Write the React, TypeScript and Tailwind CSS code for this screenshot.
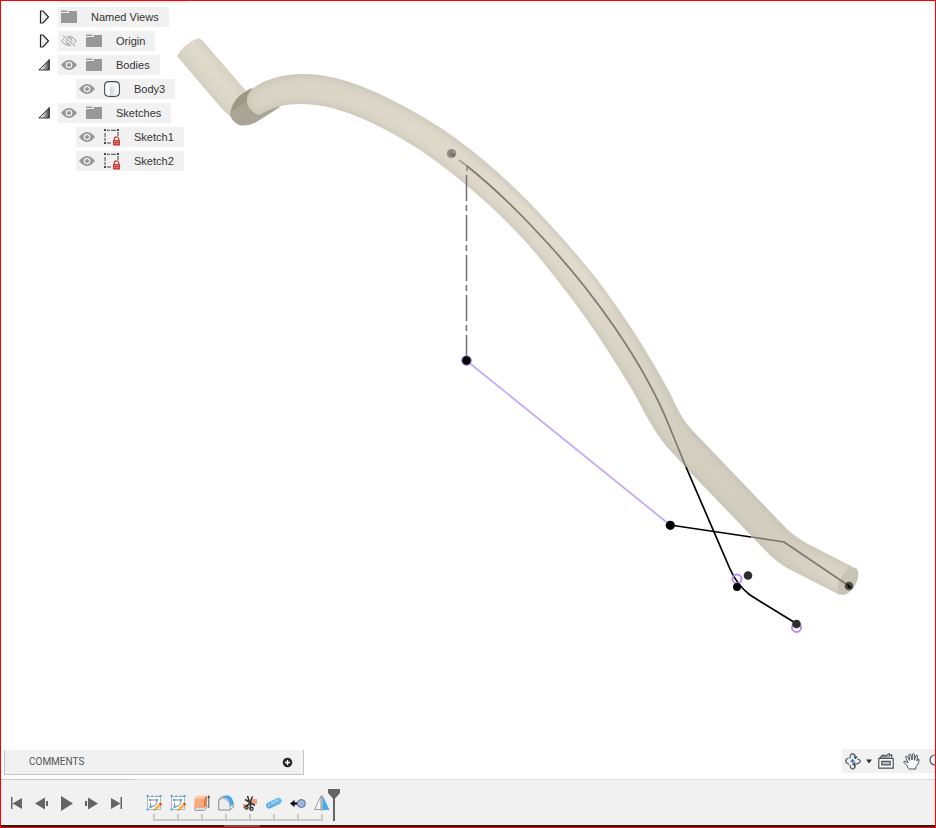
import { useState } from "react";
import type { ReactNode } from "react";

interface TreeNode {
  name: string;
  icon: "folder" | "body" | "sketch";
  // undefined = the row has no visibility toggle
  visible?: boolean;
  open?: boolean;
  children?: TreeNode[];
}

const browserTree: TreeNode[] = [
  { name: "Named Views", icon: "folder", open: false },
  { name: "Origin", icon: "folder", visible: false, open: false },
  {
    name: "Bodies",
    icon: "folder",
    visible: true,
    open: true,
    children: [{ name: "Body3", icon: "body", visible: true }],
  },
  {
    name: "Sketches",
    icon: "folder",
    visible: true,
    open: true,
    children: [
      { name: "Sketch1", icon: "sketch", visible: true },
      { name: "Sketch2", icon: "sketch", visible: true },
    ],
  },
];

function FolderIcon() {
  return (
    <svg width="16" height="16" viewBox="0 0 16 16" fill="#989898">
      <path d="M0 1.500h6.500v1.500H0zM8 2h8v1H8z" />
      <path d="M0 4h7l1.500-1H16v11H0z" />
    </svg>
  );
}

function BodyIcon() {
  return (
    <svg width="16" height="16" viewBox="0 0 16 16">
      <defs>
        <linearGradient id="cyl">
          <stop offset="0" stopColor="#fff" />
          <stop offset="0.3" stopColor="#fff" />
          <stop offset="0.35" stopColor="#d3d6de" />
          <stop offset="0.7" stopColor="#e9ebf0" />
          <stop offset="1" stopColor="#fff" />
        </linearGradient>
      </defs>
      <path d="M.7 4Q1 .7 5 .7h6q4 0 4.300 3.300v8q-.3 3.300-4.300 3.300H5Q1 15.300.7 12z" fill="#fff" stroke="#3f4756" strokeWidth="1.200" />
      <path d="M1.500 5q6.500 2 13 0v7q-.5 2.500-3.500 2.500H5q-3 0-3.500-2.500z" fill="url(#cyl)" />
    </svg>
  );
}

function SketchIcon() {
  return (
    <svg width="16" height="17" viewBox="0 0 16 17">
      <g fill="#444">
        <path d="M0 0h2v2H0zM13 0h2v2h-2zM0 13h2v2H0z" />
        <path d="M3 .8h3v1H3zM7 .8h5v1H7zM.5 4h1v4h-1zM.5 9h1v3h-1zM3 13.500h4v1H3zM13.500 3h1v4h-1z" />
      </g>
      <path d="M10.300 11.500V10a2.200 2.200 0 0 1 4.400 0v1.500" fill="none" stroke="#c93c3c" strokeWidth="1.200" />
      <path d="M9 11h7v5.500H9z" fill="#c93c3c" />
      <path d="M10 12.500h5M10 14.500h5" stroke="#e88" strokeWidth="0.700" />
    </svg>
  );
}

function EyeIcon({ off }: { off?: boolean }) {
  if (off) {
    return (
      <svg width="16" height="16" viewBox="0 0 16 16" fill="none" stroke="#9a9a9a">
        <path d="M.5 8Q4 3.500 8 3.500T15.500 8Q12 12.500 8 12.500T.5 8z" />
        <circle cx="8" cy="8" r="3" />
        <circle cx="8" cy="8" r="1" />
        <path d="M2 2.500l12 11" stroke="#f1f1f1" strokeWidth="2.500" />
        <path d="M2 2.500l12 11" />
      </svg>
    );
  }
  return (
    <svg width="16" height="16" viewBox="0 0 16 16">
      <path d="M0 8Q4 3 8 3t8 5q-4 5-8 5T0 8z" fill="#989898" />
      <circle cx="8" cy="8" r="3.300" fill="#f1f1f1" />
      <circle cx="8" cy="8" r="2.100" fill="#989898" />
    </svg>
  );
}

function ArrowIcon({ open }: { open?: boolean }) {
  return (
    <svg width="12" height="14" viewBox="0 0 12 14">
      <defs>
        <linearGradient id="openArrow">
          <stop offset="0.2" stopColor="#fff" />
          <stop offset="1" stopColor="#444" />
        </linearGradient>
      </defs>
      {open ? (
        <path d="M11.300 1.500v10.500H.9z" fill="url(#openArrow)" stroke="#222" strokeWidth="0.900" />
      ) : (
        <path d="M2.500 1h2.500L10.500 7 5 13H2.500z" fill="#eee" stroke="#222" strokeWidth="1.200" />
      )}
    </svg>
  );
}

function TreeRow({ node, child }: { node: TreeNode; child?: boolean }) {
  const [open, setOpen] = useState(node.open);
  const [visible, setVisible] = useState(node.visible);

  return (
    <li className="flex flex-col gap-1">
      <div className={child ? "flex pl-[38px]" : "flex"}>
        {!child && (
          <button className="flex w-5 items-center" aria-label={`Expand ${node.name}`} onClick={() => setOpen(!open)}>
            <ArrowIcon open={open} />
          </button>
        )}
        <div className="flex h-5 items-center bg-[#f1f1f1] pr-2.5 pl-[3px]">
          {visible !== undefined && (
            <button className="mr-[9px]" aria-label={`Show ${node.name}`} onClick={() => setVisible(!visible)}>
              <EyeIcon off={!visible} />
            </button>
          )}
          {node.icon === "folder" && <FolderIcon />}
          {node.icon === "body" && <BodyIcon />}
          {node.icon === "sketch" && <SketchIcon />}
          <span className="ml-3.5">{node.name}</span>
        </div>
      </div>
      {open && node.children && (
        <ul className="flex flex-col gap-1">
          {node.children.map((c) => (
            <TreeRow key={c.name} node={c} child />
          ))}
        </ul>
      )}
    </li>
  );
}

const tubePath =
  "M247 100C246 87 272 74 303 74C345 74 392 97 444 130C476 152 503 176 527 200C550 224 569 245 587 267C622 310 651 358 670 393C677 408 682 420 693 431L783 525Q791 534 806 543L853 567L840 595L787 568Q775 561 763 548L690 472L667 447Q656 434 643 410C636 396 629 384 620 370C597 332 572 298 543 262C520 234 494 208 466 185C450 171 436 161 420 150C375 121 335 104 301 104C284 104 273 107 259 115C251 112 247 106 247 100Z";

// The 3D view: swept tube, sketch curves and their points
function Model() {
  return (
    <svg className="absolute inset-0 h-full w-full" viewBox="1 1 934 778" role="img" aria-label="Body3">
      <defs>
        <linearGradient id="tube" gradientUnits="userSpaceOnUse" x1="250" y1="80" x2="850" y2="580">
          <stop offset="0" stopColor="#d7d3c5" />
          <stop offset="0.250" stopColor="#dfd9cb" />
          <stop offset="0.500" stopColor="#ddd8ca" />
          <stop offset="0.750" stopColor="#d3cfc0" />
          <stop offset="0.900" stopColor="#d2cebf" />
          <stop offset="1" stopColor="#dcd6c8" />
        </linearGradient>
        <linearGradient id="stub" gradientUnits="userSpaceOnUse" x1="197" y1="86" x2="224" y2="64">
          <stop offset="0" stopColor="#cfcbbc" />
          <stop offset="0.300" stopColor="#d9d5c6" />
          <stop offset="0.650" stopColor="#e1dacc" />
          <stop offset="1" stopColor="#d5d0c1" />
        </linearGradient>
        <clipPath id="tubeClip">
          <path d={tubePath} />
        </clipPath>
        <filter id="soft">
          <feGaussianBlur stdDeviation="3" />
        </filter>
        <filter id="dot" x="-50%" y="-50%" width="200%" height="200%">
          <feGaussianBlur stdDeviation="0.700" />
        </filter>
      </defs>

      <path d="M177 56Q184 43 199 38L203 41L247 92L244 122L231 117Q222 110 216 102Z" fill="url(#stub)" />
      <path d="M247 91Q232 98 230 114Q231 121 239 125Q248 127 258 121L280 107L262 84Z" fill="#a9a495" />
      <path d="M251 88Q234 97 231 112L248 100L252 92Z" fill="#98937f" opacity="0.700" />

      <path d={tubePath} fill="url(#tube)" />
      <g clipPath="url(#tubeClip)">
        <path d={tubePath} fill="none" stroke="#b9b5a5" strokeWidth="4" filter="url(#soft)" opacity="0.650" />
        <path d="M490 178C535 215 580 265 612 312" fill="none" stroke="#e9e3d6" strokeWidth="3" filter="url(#soft)" />
      </g>
      <path d="M858 571C860 580 852 594 843 595C834 594 838 583 842 576C847 568 856 564 858 571Z" fill="#c8c4b4" />

      {/* centre curve, grey where it runs inside the body */}
      <g fill="none" strokeLinejoin="round" strokeWidth="1.700">
        <path d="M459 160L467 166" stroke="#a5a194" />
        <path d="M467 166C492 186 517 210 540 235C591 289 644 362 670 428L686 467" stroke="#7c796e" />
        <path d="M686 467L730 569Q737 585 750 595L797 624" stroke="#000" />
        <path d="M670 525L751 537" stroke="#000" />
        <path d="M751 537L784 542L849 586" stroke="#7c796e" />
        <path d="M467 361L670 525" stroke="#c4a5fa" />
      </g>
      <path d="M467 165V171" stroke="#8a877b" strokeWidth="1.500" />
      <path d="M466.500 175V360" stroke="#707070" strokeWidth="1.500" strokeDasharray="26 4 6 4" />

      <circle cx="466.500" cy="360.500" r="4.800" fill="#000" stroke="#b38cf5" />
      <circle cx="670.300" cy="525.300" r="4.600" />
      <circle cx="737" cy="579" r="4.500" fill="none" stroke="#b78af8" strokeWidth="1.900" />
      <circle cx="796.500" cy="627.500" r="4.500" fill="none" stroke="#b78af8" strokeWidth="1.900" />
      <circle cx="737" cy="587" r="4" />
      <circle cx="748" cy="575.500" r="4.300" fill="#2d2d2d" filter="url(#dot)" />
      <circle cx="796.500" cy="624" r="4.300" fill="#2d2d2d" filter="url(#dot)" />
      <circle cx="849" cy="586" r="4.300" fill="#4d4b44" filter="url(#dot)" />
      <path d="M847 583L852 588L848 588Z" />
      <circle cx="451.500" cy="153.500" r="4.600" fill="#8d8a7f" filter="url(#dot)" />
      <path d="M451 154L455 156" stroke="#666" strokeWidth="1.500" />
    </svg>
  );
}

const playback: { label: string; shape: string }[] = [
  { label: "Go to beginning", shape: "M7 2h1.500v12H7zM18 3v11L8.500 8.500z" },
  { label: "Step back", shape: "M16 2.500v12L6 8.500zM17 6h2v5h-2z" },
  { label: "Play", shape: "M7 1v15L19 8.500z" },
  { label: "Step forward", shape: "M9 2.500v12L19 8.500zM6 6h2v5H6z" },
  { label: "Go to end", shape: "M7 3v11l9.500-5.500zM16.500 2H18v12h-1.500z" },
];

const SketchFeature = (
  <>
    <path d="M1.500 1.500h13v13h-13z" fill="#f8fafc" stroke="#b3b8be" />
    <path d="M3.500 5H11v1.500Q10.500 11 4.500 12V8" fill="none" stroke="#7d8791" />
    <path d="M.5 0h2v2h-2zM5.500.5h1.500v1.500H5.500zM10 .5h1.500v1.500H10zM13.500 0h2v2h-2zM.5 13.500h2v2h-2zM3 4h2v2H3zM10 4h2v2h-2zM3.500 11h2v2h-2z" fill="#49a6ea" />
    <path d="M8 15.500l1-3L13 8.500l2 2-4 4z" fill="#f6b83c" />
    <path d="M13 8.500l1.200-1 2 2-1.200 1z" fill="#e5342d" />
    <path d="M8 15.500l.6-1.600 1 1z" fill="#444" />
  </>
);

const features: { label: string; art: ReactNode }[] = [
  { label: "Sketch1", art: SketchFeature },
  { label: "Sketch2", art: SketchFeature },
  {
    label: "Extrude",
    art: (
      <>
        <path d="M.5 12v2.500q0 1 1 1H10l3-3v-2z" fill="#ddd" stroke="#888" strokeWidth="0.800" />
        <path d="M.5 3.500L3.500.5H13L10 3.500z" fill="#ffc9a0" />
        <path d="M.5 3.500H10V13H.5z" fill="#f8a97a" />
        <path d="M10 3.500l3-3V10l-3 3z" fill="#dd804a" />
        <path d="M14.800 13V2" stroke="#555" />
        <path d="M14.800 0l1.500 3h-3z" fill="#444" />
      </>
    ),
  },
  {
    label: "Fillet",
    art: (
      <>
        <path d="M.7 15V5Q2 2 5 1.500h4L15.300 8v4l-3 3z" fill="#ededed" stroke="#858a90" />
        <path d="M5 2.500L7.500.3Q15 .5 15.600 9l-3.200 2.500Q12 3 5 2.500z" fill="#44a5e8" />
        <path d="M1 6Q2 3 4 3q7 1 8 8v4" fill="none" stroke="#a0a5a9" />
      </>
    ),
  },
  {
    label: "Split",
    art: (
      <>
        <path d="M9 4h6v5H9zM1 9h5v4H1z" fill="#e9a57b" />
        <path d="M5.500 1l3 9M10.500 1.500L7 10M3 4.500l10 6" stroke="#333" strokeWidth="1.500" />
        <path d="M8 8L4 12M8.500 9v5" stroke="#333" strokeWidth="1.500" />
        <circle cx="4.500" cy="12.500" r="1.600" fill="none" stroke="#333" strokeWidth="1.300" />
        <circle cx="9.500" cy="13.700" r="1.600" fill="none" stroke="#333" strokeWidth="1.300" />
      </>
    ),
  },
  {
    label: "Pipe",
    art: (
      <>
        <path d="M3.200 10.500L12.500 6" stroke="#5aa7dc" strokeWidth="6" strokeLinecap="round" />
        <path d="M3.200 10L12.500 5.600" stroke="#6bbcf2" strokeWidth="5" strokeLinecap="round" />
        <path d="M5 8.500L12 5" stroke="#a7dcfb" strokeWidth="1.200" strokeLinecap="round" />
        <ellipse cx="3" cy="10.300" rx="1.800" ry="2.200" fill="#8fd0f7" stroke="#4b97cc" strokeWidth="0.700" />
      </>
    ),
  },
  {
    label: "Move",
    art: (
      <>
        <path d="M0 8.500l4.500-3.700v2.500h3v2.500h-3v2.500z" fill="#111" />
        <circle cx="11.300" cy="8.500" r="4" fill="#9cb8e3" stroke="#596b8a" />
      </>
    ),
  },
  {
    label: "Mirror",
    art: (
      <>
        <path d="M7 1v13.500H.7z" fill="#f8f8f8" stroke="#999" />
        <path d="M8.500 0L15.500 15h-7z" fill="#4aa9e8" />
        <path d="M7.900 0v16" stroke="#999" />
      </>
    ),
  },
];

function Timeline() {
  return (
    <footer className="bg-[#f1f1f1]">
      <div className="flex h-px">
        <div className="w-[133px] bg-[#c8c8c8]" />
        <div className="flex-1 bg-[#dadada]" />
      </div>
      <div className="flex h-[45px] items-start pl-[3px]">
        <div className="mt-[15px] flex">
          {playback.map((b) => (
            <button key={b.label} aria-label={b.label} className="w-[25px]">
              <svg width="25" height="17" viewBox="0 0 25 17" fill="#646464">
                <path d={b.shape} />
              </svg>
            </button>
          ))}
        </div>
        <div className="mt-[15px] ml-[13px]">
          <ul className="flex">
            {features.map((f) => (
              <li key={f.label} className="flex w-6 flex-col items-center gap-[3px]">
                <button aria-label={f.label}>
                  <svg width="16" height="16" viewBox="0 0 16 16" fill="none">
                    {f.art}
                  </svg>
                </button>
                <div className="h-[5px] w-0.5 bg-[#c9c9c9]" />
              </li>
            ))}
          </ul>
          <div className="mx-[11px] h-0.5 bg-[#c9c9c9]" />
        </div>
        <svg className="relative mt-[9px] -ml-1.5" width="12" height="32" viewBox="0 0 12 32" fill="#646464">
          <path d="M0 0h12v4L7 9.500V32H5V9.500L0 4z" />
        </svg>
      </div>
      <div className="flex h-0.5 bg-[#1f241f]">
        <div className="ml-[223px] w-9 bg-[#555]" />
      </div>
    </footer>
  );
}

function NavBar() {
  return (
    <div className="mb-1.5 flex h-6 w-[93px] items-center overflow-hidden bg-[#f1f1f1] pl-[3px]">
      <button aria-label="Orbit" className="shrink-0">
        <svg width="16" height="17" viewBox="0 0 16 17" fill="none" stroke="#4a515b" strokeWidth="1.200">
          <path d="M5 5.500Q5 .8 7.500.8T10.300 4M10.500 12.500Q9.500 16 7.500 16T5 12" />
          <path d="M3.500 5Q.7 6 .7 8t3.500 3.300M12.500 6q2.800.8 2.800 2.500T9 11.500" />
          <path d="M9 3.500l1.500 1.800L12.300 3.500M10 9.500l-2 2 2.300 1.500" />
          <path d="M7.500 6v4M5.500 8h4" stroke="#1b7fe0" strokeWidth="1.400" />
        </svg>
      </button>
      <button aria-label="Orbit options" className="ml-1 shrink-0">
        <svg width="8" height="5" viewBox="0 0 8 5" fill="#333">
          <path d="M1 .5h6L4 4.500z" />
        </svg>
      </button>
      <button aria-label="Look at" className="ml-[5px] shrink-0">
        <svg width="16" height="16" viewBox="0 0 16 16" fill="none" stroke="#4a515b" strokeWidth="1.200">
          <path d="M.8 5.500h14.400v9.700H.8z" fill="#fff" />
          <path d="M3.800 8.300h8.400v3.500H3.800z" fill="#b9bdc4" />
          <path d="M1.500 5L5 2l2 1L11.500.8l.3 1.700 2-.5-.3 3.500" />
          <path d="M3 4h9" strokeWidth="1" />
        </svg>
      </button>
      <button aria-label="Pan" className="ml-[9px] shrink-0">
        <svg width="17" height="17" viewBox="0 0 17 17" fill="#fff" stroke="#4a515b" strokeWidth="1" strokeLinejoin="round">
          <path d="M5.500 15.500Q4.500 12 .8 9.500.5 8 2 8.200L5 10 2.700 4.200q-.2-1.500 1.300-1L6.700 7.500 6 1.700q.7-1.500 1.700-.3L9 7 9.500 1.200q1-1.200 1.800 0L11.300 7.300 13 2.500q1.300-.7 1.500.5L13.700 8l1-1.800q1.700-.5 1.500.8Q15.500 11.500 13 13.500l-.3 2.500H6z" />
        </svg>
      </button>
      <button aria-label="Zoom" className="ml-[9px] shrink-0">
        <svg width="16" height="16" viewBox="0 0 16 16" fill="#fff" stroke="#4a515b" strokeWidth="1.200">
          <circle cx="6" cy="7" r="5" />
          <path d="M10 11l4.500 4.500" />
        </svg>
      </button>
    </div>
  );
}

export default function App() {
  return (
    <div className="flex min-h-screen flex-col border border-[#f00] bg-white font-['Liberation_Sans',Arial,sans-serif] text-[11px] leading-4 text-[#333]">
      <main className="relative flex flex-1 flex-col overflow-hidden">
        <Model />
        <nav className="relative self-start pl-[37px]">
          {/* bottom edge of the row scrolled out above */}
          <div className="mb-1 ml-5 h-0.5 w-[130px] bg-[#f1f1f1]" />
          <ul className="flex flex-col gap-1">
            {browserTree.map((n) => (
              <TreeRow key={n.name} node={n} />
            ))}
          </ul>
        </nav>
        <div className="relative mt-auto flex items-end justify-between pl-[3px]">
          <div className="mb-1 flex h-[25px] w-[300px] items-center justify-between border border-t-0 border-[#c4c4c4] bg-[#f1f1f1] pr-[10px] pl-6">
            <span className="font-[Roboto,sans-serif] text-[10px] text-[#555]">COMMENTS</span>
            <button aria-label="Add comment">
              <svg width="11" height="11" viewBox="0 0 11 11">
                <circle cx="5.500" cy="5.500" r="4.800" fill="#2b2b2b" />
                <path d="M5.500 3v5M3 5.500h5" stroke="#fff" strokeWidth="1.300" />
              </svg>
            </button>
          </div>
          <NavBar />
        </div>
      </main>
      <Timeline />
    </div>
  );
}
